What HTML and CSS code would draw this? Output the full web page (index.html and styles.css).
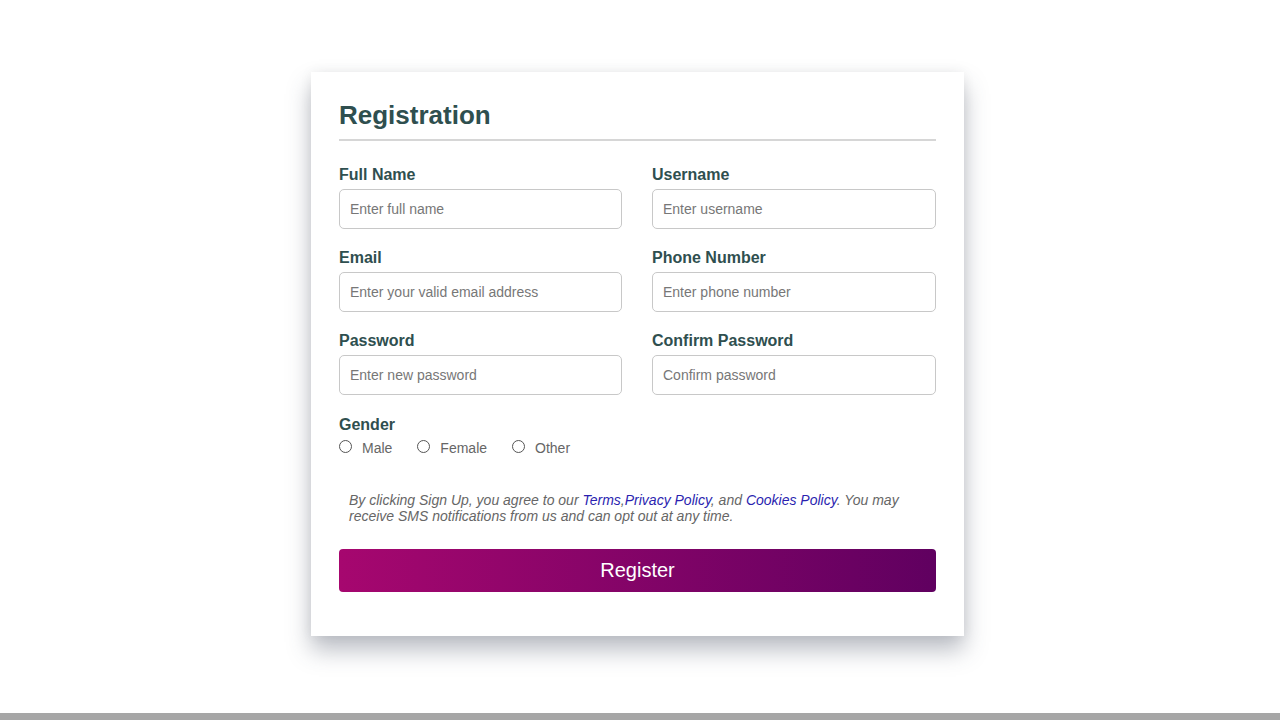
FILE: index.html
```html
<!DOCTYPE html>
<html>
<head>
<meta charset="utf-8">
<link rel="stylesheet" href="styles.css">
</head>
<body>
<div class="page">
  <form class="card">
    <h1 class="title">Registration</h1>
    <div class="grid">
      <div class="field">
        <label class="label">Full Name</label>
        <input class="input" type="text" placeholder="Enter full name">
      </div>
      <div class="field">
        <label class="label">Username</label>
        <input class="input" type="text" placeholder="Enter username">
      </div>
      <div class="field">
        <label class="label">Email</label>
        <input class="input" type="text" placeholder="Enter your valid email address">
      </div>
      <div class="field">
        <label class="label">Phone Number</label>
        <input class="input" type="text" placeholder="Enter phone number">
      </div>
      <div class="field">
        <label class="label">Password</label>
        <input class="input" type="text" placeholder="Enter new password">
      </div>
      <div class="field">
        <label class="label">Confirm Password</label>
        <input class="input" type="text" placeholder="Confirm password">
      </div>
    </div>
    <div class="gender">
      <div class="label">Gender</div>
      <div class="options">
        <label class="option"><span class="radio"></span>Male</label>
        <label class="option"><span class="radio"></span>Female</label>
        <label class="option"><span class="radio"></span>Other</label>
      </div>
    </div>
    <p class="terms">By clicking Sign Up, you agree to our <a class="link">Terms</a>,<a class="link">Privacy Policy</a>, and <a class="link">Cookies Policy</a>. You may receive SMS notifications from us and can opt out at any time.</p>
    <button class="btn" type="button">Register</button>
  </form>
</div>
<div class="footer-bar"></div>
</body>
</html>
```
FILE: styles.css
```css
* { box-sizing: border-box; }
html, body { margin: 0; padding: 0; background: #fff; }
body {
  font-family: "Liberation Sans", Arial, sans-serif;
  height: 720px;
  overflow: hidden;
  display: flex;
  flex-direction: column;
}
.page {
  flex: 1;
  display: flex;
  justify-content: center;
  align-items: flex-start;
  padding-top: 72px;
  padding-right: 5px;
}
.card {
  width: 653px;
  background: #fff;
  padding: 28px 28px 44px;
  box-shadow: 0 14px 22px rgba(60, 70, 90, 0.35), 0 0 12px rgba(0, 0, 0, 0.06);
}
.title {
  margin: 0;
  font-size: 26px;
  line-height: 30px;
  font-weight: bold;
  color: #2f4f4f;
  padding-bottom: 9px;
  border-bottom: 2px solid #d6d6d6;
}
.grid {
  display: grid;
  grid-template-columns: 283px 284px;
  column-gap: 30px;
  row-gap: 19px;
  margin-top: 24px;
}
.field { display: flex; flex-direction: column; }
.label {
  font-size: 16px;
  line-height: 19px;
  font-weight: bold;
  color: #2f4f4f;
  margin-bottom: 5px;
}
.input {
  height: 40px;
  border: 1px solid #c8c8c8;
  border-radius: 5px;
  padding: 0 10px;
  font-family: "Liberation Sans", Arial, sans-serif;
  font-size: 14px;
  color: #333;
  outline: none;
}
.input::placeholder { color: #777; }
.gender { margin-top: 20px; }
.gender .label { margin-bottom: 5px; }
.options { display: flex; gap: 25px; }
.option {
  display: flex;
  align-items: center;
  font-size: 14px;
  line-height: 18px;
  color: #666;
}
.radio {
  width: 13px;
  height: 13px;
  border: 1px solid #555;
  border-radius: 50%;
  margin-right: 10px;
  margin-top: -3px;
  background: #fff;
}
.terms {
  margin: 35px 0 0;
  padding: 0 10px;
  font-size: 14px;
  line-height: 16px;
  font-style: italic;
  color: #666;
}
.link { color: #2b1fb0; text-decoration: none; }
.btn {
  display: block;
  width: 100%;
  height: 43px;
  margin-top: 25px;
  border: none;
  border-radius: 4px;
  background: linear-gradient(to right, #a6076f, #600060);
  color: #fff;
  font-family: "Liberation Sans", Arial, sans-serif;
  font-size: 20px;
}
.footer-bar {
  height: 7px;
  background: #a6a6a6;
  flex-shrink: 0;
}
```
